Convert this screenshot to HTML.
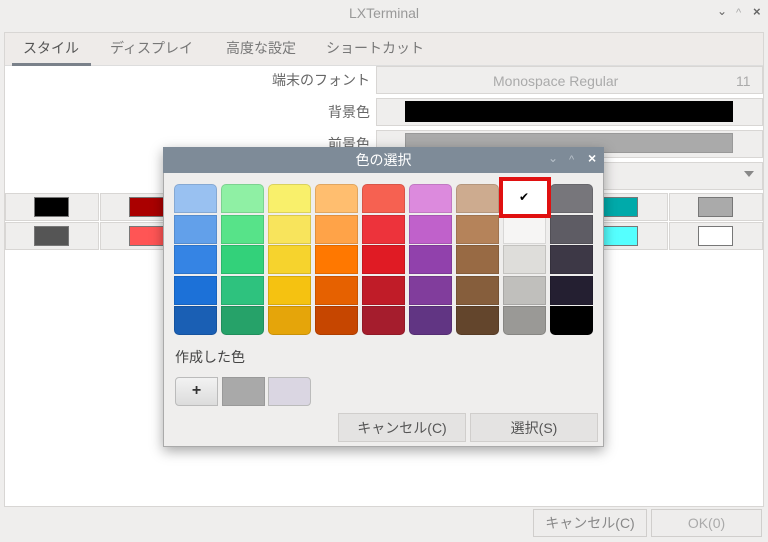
<!DOCTYPE html>
<html><head><meta charset="utf-8"><style>
*{margin:0;padding:0;box-sizing:border-box}
body{width:768px;height:542px;background:#efeeed;position:relative;overflow:hidden;font-family:"Liberation Sans","Noto Sans CJK JP",sans-serif;color:#444}
.a{position:absolute}
.t{font-size:14px;line-height:1}
.cell{position:absolute;background:#efeeed;border:1px solid #d8d6d4}
.sw{position:absolute;border:1px solid #777}
.pc{position:absolute;width:43px;height:29px;border:1px solid rgba(0,0,0,0.12)}
.btn{position:absolute;background:#e4e3e2;border:1px solid #d0cecc;text-align:center;font-size:14px;color:#555}
</style></head><body>
<div class="a t" style="left:0;width:768px;top:6px;text-align:center;color:#999">LXTerminal</div>
<div class="a" style="left:717px;top:4px;font-size:12px;color:#666">⌄</div>
<div class="a" style="left:736px;top:7px;font-size:11px;color:#aaa">^</div>
<div class="a" style="left:753px;top:4px;font-size:13px;color:#666;font-weight:bold">×</div>

<div class="a" style="left:4px;top:32px;width:760px;height:475px;border:1px solid #d8d6d4;background:#fff"></div>
<div class="a" style="left:5px;top:33px;width:758px;height:33px;background:#eeebe9;border-bottom:1px solid #ddd"></div>
<div class="a t" style="left:23px;top:41px;color:#555">スタイル</div>
<div class="a" style="left:12px;top:63px;width:79px;height:3px;background:#7a818a"></div>
<div class="a t" style="left:110px;top:41px;color:#777">ディスプレイ</div>
<div class="a t" style="left:226px;top:41px;color:#777">高度な設定</div>
<div class="a t" style="left:326px;top:41px;color:#777">ショートカット</div>

<div class="a t" style="left:200px;width:170px;text-align:right;top:73px;color:#666">端末のフォント</div>
<div class="cell" style="left:376px;top:66px;width:387px;height:28px"></div>
<div class="a t" style="left:493px;top:74px;color:#aaa">Monospace Regular</div>
<div class="a t" style="left:736px;top:74px;color:#aaa">11</div>
<div class="a t" style="left:200px;width:170px;text-align:right;top:105px;color:#666">背景色</div>
<div class="cell" style="left:376px;top:98px;width:387px;height:28px"></div>
<div class="a" style="left:405px;top:101px;width:328px;height:21px;background:#000"></div>
<div class="a t" style="left:200px;width:170px;text-align:right;top:137px;color:#666">前景色</div>
<div class="cell" style="left:376px;top:130px;width:387px;height:28px"></div>
<div class="a" style="left:405px;top:133px;width:328px;height:20px;background:#aaa;border:1px solid #999"></div>
<div class="cell" style="left:376px;top:162px;width:387px;height:28px"></div>
<div class="a" style="left:744px;top:171px;width:0;height:0;border-left:5px solid transparent;border-right:5px solid transparent;border-top:6px solid #888"></div>

<div class="cell" style="left:5px;top:193px;width:94px;height:28px"></div><div class="sw" style="left:34px;top:197px;width:35px;height:20px;background:#000"></div>
<div class="cell" style="left:100px;top:193px;width:94px;height:28px"></div><div class="sw" style="left:129px;top:197px;width:35px;height:20px;background:#aa0000"></div>
<div class="cell" style="left:574px;top:193px;width:94px;height:28px"></div><div class="sw" style="left:603px;top:197px;width:35px;height:20px;background:#00aaaa"></div>
<div class="cell" style="left:669px;top:193px;width:94px;height:28px"></div><div class="sw" style="left:698px;top:197px;width:35px;height:20px;background:#aaa"></div>
<div class="cell" style="left:5px;top:222px;width:94px;height:28px"></div><div class="sw" style="left:34px;top:226px;width:35px;height:20px;background:#555"></div>
<div class="cell" style="left:100px;top:222px;width:94px;height:28px"></div><div class="sw" style="left:129px;top:226px;width:35px;height:20px;background:#ff5555"></div>
<div class="cell" style="left:574px;top:222px;width:94px;height:28px"></div><div class="sw" style="left:603px;top:226px;width:35px;height:20px;background:#55ffff"></div>
<div class="cell" style="left:669px;top:222px;width:94px;height:28px"></div><div class="sw" style="left:698px;top:226px;width:35px;height:20px;background:#fff"></div>

<div class="btn" style="left:533px;top:509px;width:114px;height:28px;line-height:26px;background:#eeedec;color:#888">キャンセル(C)</div>
<div class="btn" style="left:651px;top:509px;width:111px;height:28px;line-height:26px;background:#eeedec;color:#aaa">OK(0)</div>

<div class="a" style="left:163px;top:147px;width:441px;height:300px;background:#efeeed;border:1px solid #aaa;box-shadow:0 4px 12px rgba(0,0,0,0.35)"></div>
<div class="a" style="left:163px;top:147px;width:441px;height:26px;background:#7e8b98"></div>
<div class="a t" style="left:163px;width:441px;text-align:center;top:153px;color:#fff">色の選択</div>
<div class="a" style="left:548px;top:151px;font-size:12px;color:#b9c2cb">⌄</div>
<div class="a" style="left:569px;top:154px;font-size:11px;color:#b9c2cb">^</div>
<div class="a" style="left:588px;top:150px;font-size:14px;color:#fff;font-weight:bold">×</div>

<div id="g"></div>
<div class="a" style="left:499px;top:177px;width:52px;height:41px;border:4px solid #e01010;background:#fff"></div>
<div class="a" style="left:519px;top:190px;font-size:12px;color:#000">✔</div>

<div class="a t" style="left:175px;top:350px;color:#444">作成した色</div>
<div class="a" style="left:175px;top:377px;width:43px;height:29px;background:linear-gradient(#f2f2f2,#dcdcdc);border:1px solid #bbb;border-radius:4px 0 0 4px;text-align:center;font-size:16px;font-weight:bold;line-height:26px;color:#333">+</div>
<div class="a" style="left:222px;top:377px;width:43px;height:29px;background:#a9a9a9;border:1px solid #999"></div>
<div class="a" style="left:268px;top:377px;width:43px;height:29px;background:#dad6e2;border:1px solid #bbb;border-radius:0 4px 4px 0"></div>

<div class="btn" style="left:338px;top:413px;width:128px;height:29px;line-height:28px">キャンセル(C)</div>
<div class="btn" style="left:470px;top:413px;width:128px;height:29px;line-height:28px">選択(S)</div>

<script>
var cols=[["#99c1f1","#62a0ea","#3584e4","#1c71d8","#1a5fb4"],["#8ff0a4","#57e389","#33d17a","#2ec27e","#26a269"],["#f9f06b","#f8e45c","#f6d32d","#f5c211","#e5a50a"],["#ffbe6f","#ffa348","#ff7800","#e66100","#c64600"],["#f66151","#ed333b","#e01b24","#c01c28","#a51d2d"],["#dc8add","#c061cb","#9141ac","#813d9c","#613583"],["#cdab8f","#b5835a","#986a44","#865e3c","#63452c"],["#ffffff","#f6f5f4","#deddda","#c0bfbc","#9a9996"],["#77767b","#5e5c64","#3d3846","#241f31","#000000"]];
var h="";
for(var c=0;c<9;c++)for(var r=0;r<5;r++){
var br=r==0?"5px 5px 0 0":(r==4?"0 0 5px 5px":"0");
h+='<div class="pc" style="left:'+(174+c*47)+'px;top:'+(184+r*30.6)+'px;height:29px;background:'+cols[c][r]+';border-radius:'+br+'"></div>';}
document.getElementById("g").innerHTML=h;
</script>
</body></html>
